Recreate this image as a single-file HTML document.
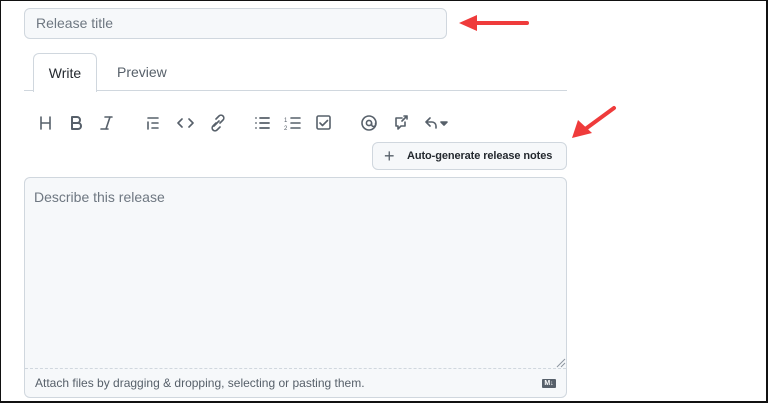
<!DOCTYPE html><html><head><style>
body{margin:0;width:768px;height:403px;background:#fff;position:relative;overflow:hidden;font-family:"Liberation Sans",sans-serif;}
.frame{position:absolute;left:0;top:0;width:765px;height:400px;border:1px solid #111;border-right-width:2px;border-bottom-width:2px;}
.inp{position:absolute;left:24px;top:8px;width:410px;height:29px;border:1px solid #d0d7de;border-radius:6px;background:#f6f8fa;color:#6e7781;font-size:14px;line-height:29px;padding-left:11px;}
.tabline{position:absolute;left:24px;top:90px;width:543px;height:1px;background:#d0d7de;}
.tab{position:absolute;left:33px;top:53px;width:62px;height:38px;border:1px solid #d0d7de;border-bottom:none;border-radius:6px 6px 0 0;background:#fff;font-size:14px;color:#24292f;text-align:center;line-height:38px;}
.prev{position:absolute;left:117px;top:53px;line-height:38px;font-size:14px;color:#57606a;}
.ic{position:absolute;top:114px;}
.btn{position:absolute;left:372px;top:142px;width:193px;height:26px;border:1px solid #d0d7de;border-radius:6px;background:#f6f8fa;font-size:11px;font-weight:bold;color:#24292f;line-height:26px;white-space:nowrap;}
.ta{position:absolute;left:24px;top:177px;width:541px;height:219px;border:1px solid #d0d7de;border-radius:6px;background:#f6f8fa;}
.ph{position:absolute;left:9px;top:11px;font-size:14px;color:#6e7781;}
.dot{position:absolute;left:0;top:190px;width:541px;border-top:1px dashed #d0d7de;}
.ft{position:absolute;left:10px;top:198px;font-size:12px;color:#57606a;}
</style></head><body>
<div class="frame"></div>
<div class="inp">Release title</div>
<svg style="position:absolute;left:455px;top:13px" width="80" height="22"><path d="M72 10 H20" stroke="#ef3b3b" stroke-width="4" stroke-linecap="round"/><path d="M4 10 L22 2 L22 18 Z" fill="#ef3b3b"/></svg>
<div class="tabline"></div>
<div class="tab">Write</div>
<div class="prev">Preview</div>
<svg class="ic" style="left:38px" width="410" height="18" fill="none" stroke="#57606a" stroke-width="1.6" stroke-linecap="round" stroke-linejoin="round">
<path d="M3 3v12M12 3v12M3 9h9"/>
<path d="M34 3h5a3 3 0 010 6h-5zM34 9h6a3 3 0 010 6h-6z" stroke-width="2"/>
<path d="M67 3h7M63 15h7M72 3l-4 12"/>
<path d="M110 4h10M114 9h6M114 14h6M110 8v7"/>
<path d="M144 5l-4 4 4 4M151 5l4 4-4 4"/>
<path d="M178 9l-3 3a2.5 2.5 0 004 4l3-3M182 9l3-3a2.5 2.5 0 00-4-4l-3 3M176 12l5-5"/>
<path d="M222 4h9M222 9h9M222 14h9M218 4h0M218 9h0M218 14h0" stroke-width="1.8"/>
<path d="M253 4h9M253 9h9M253 14h9"/><text x="246" y="8" font-size="6" fill="#57606a" stroke="none">1</text><text x="246" y="16" font-size="6" fill="#57606a" stroke="none">2</text>
<rect x="279" y="2" width="13" height="13" rx="1.5"/><path d="M282 9l2.5 2.5 5-5"/>
<circle cx="331" cy="9" r="7"/><circle cx="331" cy="9" r="2.6"/><path d="M333.6 9v1.5a2 2 0 004 0V9"/>
<path d="M364 4h-6v8h2v3l3-3h4v-4M364 7l5-5M366 2h3v3"/>
<path d="M392 4l-4 4 4 4M388 8h6a4 4 0 014 4v2"/><path d="M403 8h6l-3 3z" fill="#57606a"/>
</svg>
<svg style="position:absolute;left:566px;top:102px" width="56" height="40"><path d="M48 6 L18 28" stroke="#ef3b3b" stroke-width="4" stroke-linecap="round"/><path d="M6 36 L12 18 L26 31 Z" fill="#ef3b3b"/></svg>
<div class="btn"><span style="position:absolute;left:11px;top:0;font-weight:normal;font-size:18px;color:#57606a">+</span><span style="position:absolute;left:34px;letter-spacing:-0.1px">Auto-generate release notes</span></div>
<div class="ta"><div class="ph">Describe this release</div>
<svg style="position:absolute;left:531px;top:180px" width="10" height="10" stroke="#8c959f"><path d="M1 9L9 1M5 9L9 5"/></svg>
<div class="dot"></div><div class="ft">Attach files by dragging &amp; dropping, selecting or pasting them.</div>
<div style="position:absolute;left:517px;top:201px;width:14px;height:9px;background:#57606a;border-radius:1px;color:#fff;font-size:7px;font-weight:bold;line-height:9px;text-align:center">M↓</div>
</div>
</body></html>
